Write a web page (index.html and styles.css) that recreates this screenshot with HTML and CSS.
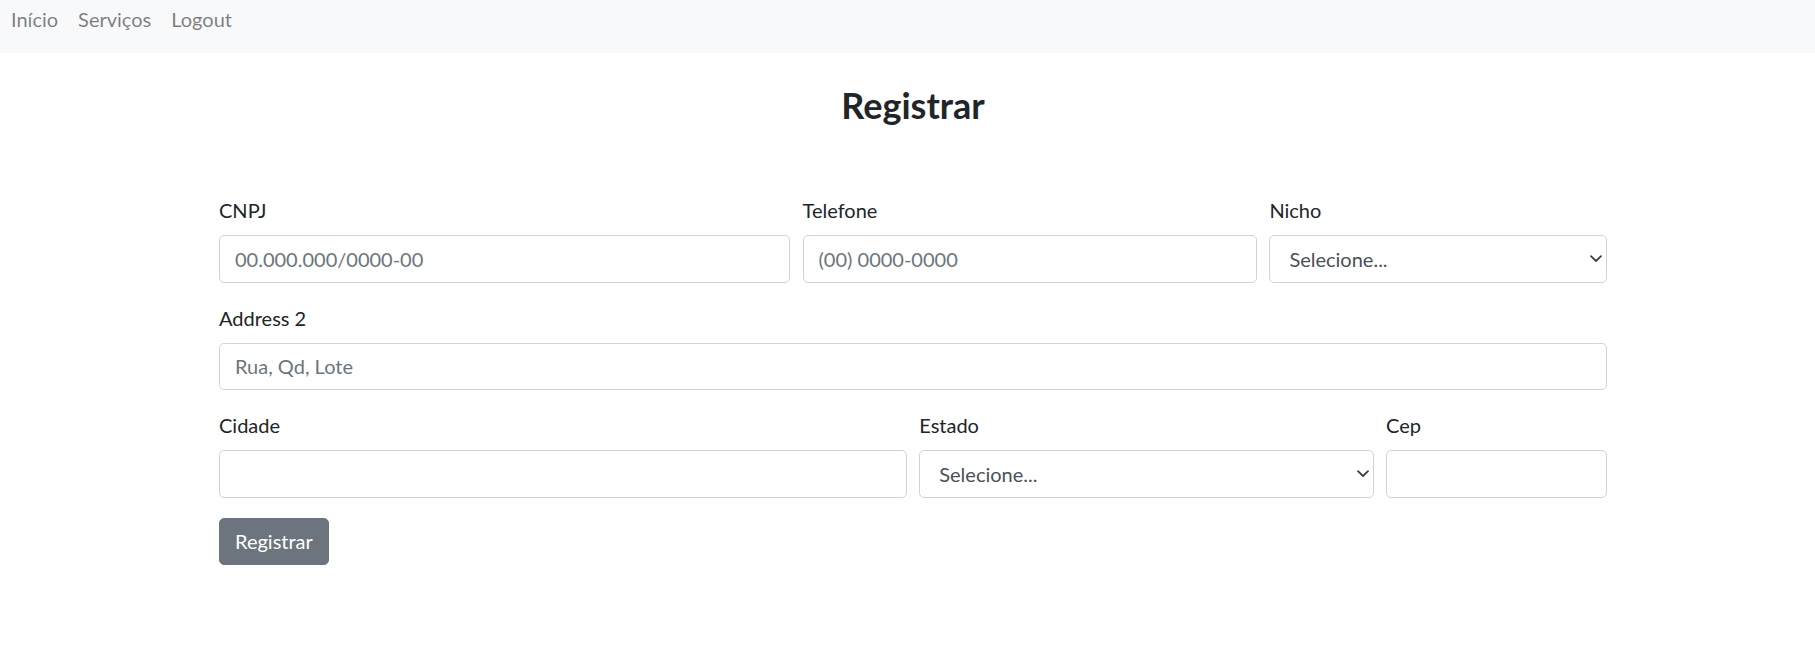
FILE: index.html
```html
<!DOCTYPE html>
<html lang="pt-BR">
<head>
<meta charset="utf-8">
<title>Registrar</title>
<link rel="stylesheet" href="styles.css">
</head>
<body>
<nav class="navbar">
  <a class="nav-link" href="#">Início</a>
  <a class="nav-link" href="#">Serviços</a>
  <a class="nav-link" href="#">Logout</a>
</nav>
<main class="container">
  <h2 class="title">Registrar</h2>
  <form class="form">
    <div class="form-row">
      <div class="field span-5">
        <label for="cnpj">CNPJ</label>
        <input id="cnpj" class="control" type="text" placeholder="00.000.000/0000-00">
      </div>
      <div class="field span-4">
        <label for="tel">Telefone</label>
        <input id="tel" class="control" type="text" placeholder="(00) 0000-0000">
      </div>
      <div class="field span-3">
        <label for="nicho">Nicho</label>
        <div class="select-wrap">
          <select id="nicho" class="control select"><option>Selecione...</option></select>
          <svg class="chevron" width="12" height="8" viewBox="0 0 12 8" aria-hidden="true"><polyline points="1,1.2 6,6 11,1.2" fill="none" stroke="#3f4245" stroke-width="1.8" stroke-linecap="round" stroke-linejoin="round"/></svg>
        </div>
      </div>
    </div>
    <div class="form-row">
      <div class="field span-12">
        <label for="addr">Address 2</label>
        <input id="addr" class="control" type="text" placeholder="Rua, Qd, Lote">
      </div>
    </div>
    <div class="form-row">
      <div class="field span-6">
        <label for="cidade">Cidade</label>
        <input id="cidade" class="control" type="text">
      </div>
      <div class="field span-4">
        <label for="estado">Estado</label>
        <div class="select-wrap">
          <select id="estado" class="control select"><option>Selecione...</option></select>
          <svg class="chevron" width="12" height="8" viewBox="0 0 12 8" aria-hidden="true"><polyline points="1,1.2 6,6 11,1.2" fill="none" stroke="#3f4245" stroke-width="1.8" stroke-linecap="round" stroke-linejoin="round"/></svg>
        </div>
      </div>
      <div class="field span-2">
        <label for="cep">Cep</label>
        <input id="cep" class="control" type="text">
      </div>
    </div>
    <button type="submit" class="btn">Registrar</button>
  </form>
</main>
</body>
</html>
```
FILE: styles.css
```css
* { box-sizing: border-box; }
html, body { margin: 0; padding: 0; }
body {
  font-family: "Lato", "Open Sans", sans-serif;
  font-size: 20px;
  line-height: 30px;
  color: #212529;
  background: #fff;
}
.navbar {
  display: flex;
  height: 53px;
  padding: 4px 0 0 1px;
  background: #f8f9fa;
}
.nav-link {
  display: block;
  padding: 0 10px;
  font-size: 20px;
  color: rgba(0, 0, 0, 0.5);
  text-decoration: none;
  line-height: 30px;
}
.container {
  width: 1388px;
  margin-left: 219px;
}
.title {
  margin: 28px 0 66px 0;
  font-size: 36px;
  line-height: 48px;
  font-weight: 700;
  text-align: center;
}
.form { margin: 0; }
.form-row {
  display: grid;
  grid-template-columns: repeat(12, 1fr);
  column-gap: 12.5px;
}
.field {
  display: flex;
  flex-direction: column;
  margin-bottom: 20px;
}
.span-2 { grid-column: span 2; }
.span-3 { grid-column: span 3; }
.span-4 { grid-column: span 4; }
.span-5 { grid-column: span 5; }
.span-6 { grid-column: span 6; }
.span-12 { grid-column: span 12; }
label {
  display: block;
  margin-bottom: 10px;
  line-height: 30px;
}
.control {
  display: block;
  width: 100%;
  height: 47.5px;
  padding: 7.5px 15px;
  font-family: inherit;
  font-size: 20px;
  line-height: 30px;
  color: #495057;
  background-color: #fff;
  border: 1px solid #ced4da;
  border-radius: 5px;
  outline: none;
}
.control::placeholder { color: #6c757d; opacity: 1; }
.select-wrap { position: relative; }
.select {
  -webkit-appearance: none;
  appearance: none;
  padding-left: 19px;
  padding-right: 30px;
}
.chevron {
  position: absolute;
  right: 5px;
  top: 20px;
  pointer-events: none;
}
.btn {
  display: inline-block;
  height: 47.5px;
  padding: 7.5px 15px;
  font-family: inherit;
  font-size: 20px;
  line-height: 30px;
  color: #fff;
  background-color: #6c757d;
  border: 1px solid #6c757d;
  border-radius: 5px;
  cursor: pointer;
}
```
